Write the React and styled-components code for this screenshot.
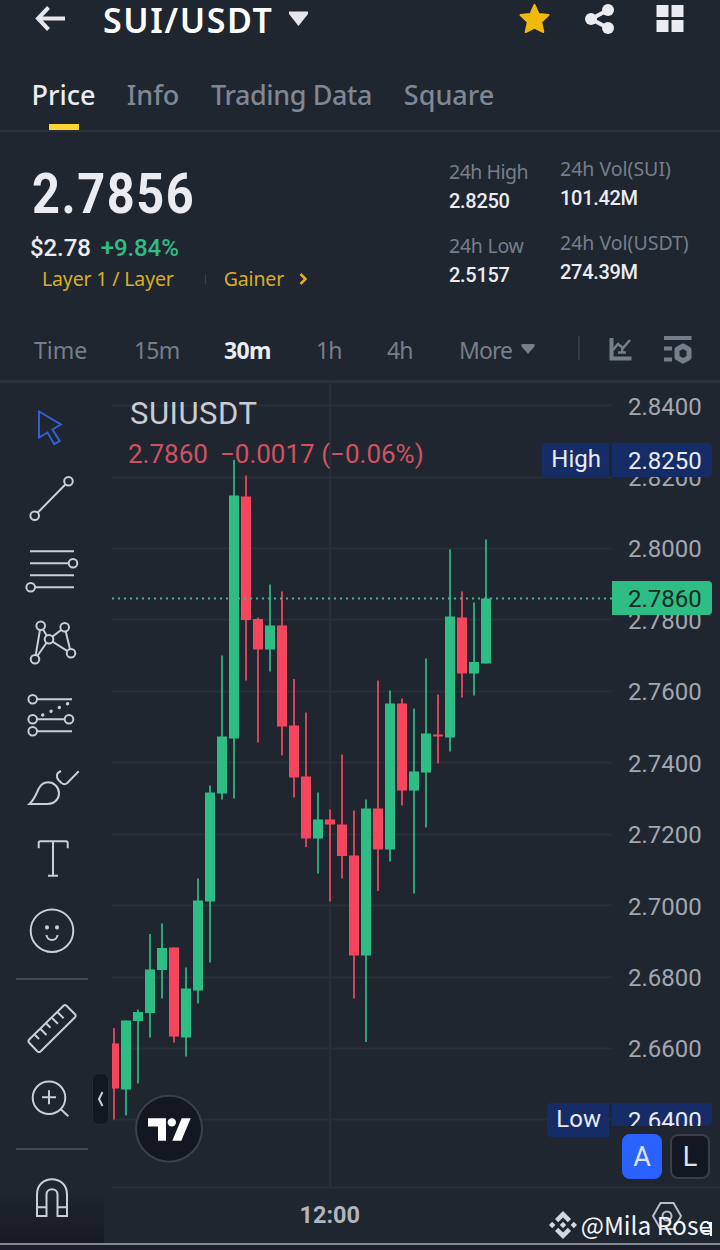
import React from "react";
import styled, { createGlobalStyle, ThemeProvider } from "styled-components";

const theme = {
   colors: {
      bg: "#1f262f",
      line: "#2a313b",
      text: "#eaecf2",
      muted: "#777e8b",
      yellow: "#f0b90b",
      green: "#2ebd85",
      red: "#f6465d",
      navy: "#152c66",
      icon: "#c9ced9"
   }
};

const GlobalStyle = createGlobalStyle`
   * {
      box-sizing: border-box;
   }

   body {
      margin: 0;
      background: #1f262f;
   }
`;

const Screen = styled.div`
   position: relative;
   display: flex;
   flex-direction: column;
   width: 720px;
   height: 1250px;
   overflow: hidden;
   background: ${({ theme }) => theme.colors.bg};
   color: ${({ theme }) => theme.colors.text};
   font-family: "Noto Sans", sans-serif;
   white-space: nowrap;
`;

const TopBar = styled.header`
   display: flex;
   align-items: center;
   height: 38px;
   padding: 0 34px 0 35px;

   svg {
      flex: none;
   }
`;

const Pair = styled.h1`
   width: 171px;
   margin: 1px 15px 0 38px;
   color: white;
   font-size: 34px;
   font-weight: 600;
   letter-spacing: 1.6px;
   line-height: 40px;
`;

const Actions = styled.div`
   display: flex;
   align-items: center;
   gap: 35px;
   margin-left: auto;
`;

const Tabs = styled.nav`
   display: flex;
   height: 94px;
   padding: 37px 31px 0 32px;
   border-bottom: 2px solid ${({ theme }) => theme.colors.line};
`;

const Tab = styled.div`
   display: flex;
   flex-direction: column;
   align-items: center;
   width: ${({ $width }) => $width}px;
   margin-right: 31px;
   color: ${({ theme, $active }) => ($active ? theme.colors.text : "#808794")};
   font-size: 27px;
   font-weight: 500;
   letter-spacing: ${({ $spacing }) => $spacing || 0}px;
   line-height: 40px;

   &::after {
      content: "";
      width: 30px;
      height: 6px;
      margin-top: 9px;
      background: ${({ $active }) => ($active ? "#fcd535" : "transparent")};
   }
`;

const Summary = styled.section`
   display: flex;
   height: 188px;
   padding-left: 32px;
`;

const PriceBlock = styled.div`
   width: 417px;
   padding-top: 30px;
   font-family: Roboto, sans-serif;
`;

const LastPrice = styled.div`
   font-size: 56px;
   font-weight: 700;
   letter-spacing: 1.8px;
   line-height: 64px;
   transform: scaleX(0.87);
   transform-origin: left;
`;

const Change = styled.div`
   display: flex;
   gap: 10px;
   margin: 9px 0 0 -2px;
   font-size: 24px;
   font-weight: 500;
   letter-spacing: -0.1px;
   line-height: 26px;

   span {
      color: ${({ theme }) => theme.colors.green};
   }
`;

const Tags = styled.div`
   display: flex;
   align-items: center;
   margin: 5px 0 0 10px;
   color: #d9ae27;
   font-family: "Noto Sans", sans-serif;
   font-size: 19.5px;
   letter-spacing: -0.15px;
   line-height: 26px;
`;

const TagRule = styled.i`
   width: 1px;
   height: 9px;
   margin: 0 18px 0 31px;
   background: #3a414c;
`;

const Stats = styled.div`
   width: ${({ $width }) => $width}px;
   padding-top: ${({ $top }) => $top}px;
`;

const Stat = styled.div`
   height: 74px;
   font-size: 19.5px;
   letter-spacing: ${({ $spacing }) => $spacing || 0}px;
   line-height: 28px;
   color: ${({ theme }) => theme.colors.muted};

   strong {
      display: block;
      margin-top: 1px;
      color: ${({ theme }) => theme.colors.text};
      font-family: Roboto, sans-serif;
      font-size: 20px;
      font-weight: 500;
      letter-spacing: -0.3px;
   }
`;

const Intervals = styled.nav`
   display: flex;
   align-items: center;
   height: 60px;
   padding-left: 34px;
   color: ${({ theme }) => theme.colors.muted};
   font-size: 23px;
`;

const Interval = styled.div`
   width: ${({ $width }) => $width}px;
   color: ${({ theme, $active }) => ($active ? theme.colors.text : "inherit")};
   font-weight: ${({ $active }) => ($active ? 700 : 400)};
   letter-spacing: ${({ $spacing }) => $spacing || 0}px;
   line-height: 30px;
`;

const ToolbarRule = styled.i`
   width: 2px;
   height: 24px;
   margin: 0 29px 4px 43px;
   background: #323944;
`;

const Workspace = styled.main`
   position: relative;
   display: grid;
   grid-template-columns: 104px 508px 108px;
   height: 863px;
   border-top: 3px solid ${({ theme }) => theme.colors.line};
   font-family: Roboto, sans-serif;
`;

const ToolRail = styled.aside`
   display: flex;
   flex-direction: column;
   padding-top: 8px;
   background: linear-gradient(transparent 805px, #171b26 855px);
`;

const ToolIcon = styled.svg`
   display: block;
   flex: none;
   width: 104px;
   height: 72px;
   fill: none;
   stroke: ${({ theme, $active }) => ($active ? "#3360d4" : theme.colors.icon)};
   stroke-width: 2;
`;

const RailRule = styled.hr`
   width: 72px;
   height: 2px;
   margin: 11px 16px;
   border: 0;
   background: #434853;

   & + svg {
      margin-top: ${({ $tight }) => ($tight ? 0 : 2)}px;
   }
`;

const Plot = styled.div`
   position: relative;
   padding-left: 8px;

   > svg {
      display: block;
      margin-right: -108px;
      overflow: visible;
   }
`;

const Legend = styled.div`
   position: absolute;
   top: 13px;
   left: 26px;
   color: #c9ccd6;
   font-size: 31px;
   letter-spacing: 0.5px;
   line-height: 36px;

   p {
      display: flex;
      gap: 12px;
      margin: 5px 0 0 -2px;
      color: #cf5264;
      font-size: 26px;
      letter-spacing: 0;
      line-height: 34px;
   }
`;

const EdgeTag = styled.div`
   position: absolute;
   top: ${({ $top }) => $top}px;
   right: 3px;
   height: 34px;
   padding: 0 8px 0 9px;
   border-radius: 4px 0 0 4px;
   background: ${({ theme }) => theme.colors.navy};
   color: #e8ebf3;
   font-size: 24px;
   line-height: 33px;
`;

const TimeLabel = styled.div`
   position: absolute;
   top: 818px;
   left: 195.5px;
   color: #b2b5be;
   font-size: 23.5px;
   font-weight: 700;
   line-height: 29px;
`;

const Collapse = styled.button`
   position: absolute;
   left: 92px;
   top: 690px;
   display: flex;
   align-items: center;
   justify-content: center;
   width: 17px;
   height: 52px;
   padding: 0;
   border: 1px solid #262b36;
   border-radius: 7px;
   background: #131722;
`;

const Axis = styled.div`
   position: relative;
   display: flex;
   flex-direction: column;
   gap: 47.45px;
   padding: 11.5px 0 0 16px;
   color: #a3a7b1;
   font-size: 24px;
   line-height: 24px;
`;

const AxisTag = styled.div`
   position: absolute;
   left: 0;
   top: ${({ $top }) => $top}px;
   width: 100px;
   height: ${({ $height }) => $height || 34}px;
   padding-left: 16px;
   overflow: hidden;
   border-radius: 0 4px 4px 0;
   background: ${({ theme, $color }) => theme.colors[$color]};
   color: ${({ $color }) => ($color === "green" ? "#0e2b24" : "#e8ebf3")};
   line-height: 36px;
`;

const ScaleModes = styled.div`
   position: absolute;
   top: 751px;
   left: 10px;
   display: flex;
   gap: 8px;
`;

const ScaleButton = styled.button`
   width: 40px;
   height: 45px;
   padding: 0;
   border: 2px solid ${({ $on }) => ($on ? "#2962ff" : "#3a3e49")};
   border-radius: 8px;
   background: ${({ $on }) => ($on ? "#2962ff" : "#131722")};
   color: #e0e3eb;
   font-family: Roboto, sans-serif;
   font-size: 27px;
`;

const AxisSettings = styled.svg`
   position: absolute;
   left: 39px;
   top: 817px;
`;

const BottomEdge = styled.footer`
   height: 7px;
   border-top: 2px solid #858a92;
   background: #1b1e2b;
`;

const Signature = styled.div`
   position: absolute;
   right: 8px;
   bottom: 9px;
   display: flex;
   align-items: center;
   gap: 4px;
   color: #f4f4f6;
   font-family: "Noto Sans CJK SC", sans-serif;
   font-size: 24.5px;
   line-height: 32px;
`;

const Corner = styled.svg`
   position: absolute;
   right: 0;
   bottom: 5px;
`;

const prices = [
   "2.8400",
   "2.8200",
   "2.8000",
   "2.7800",
   "2.7600",
   "2.7400",
   "2.7200",
   "2.7000",
   "2.6800",
   "2.6600"
];

// [high, body top, body bottom, low, rising]
const candles = [
   [1028, 1043.5, 1088.5, 1119.5, 0],
   [1020.5, 1020.5, 1089.5, 1115.5, 1],
   [1009.5, 1012, 1021, 1083.5, 1],
   [934, 969.5, 1013, 1037.5, 1],
   [923.5, 948, 970, 998.5, 1],
   [947.5, 947.5, 1036.5, 1042.5, 0],
   [967.5, 988.5, 1037.5, 1056.5, 1],
   [878.5, 900.5, 990.5, 1003.5, 1],
   [785.5, 792.5, 901.5, 962.5, 1],
   [655.5, 736.5, 793.5, 799.5, 1],
   [460, 495.5, 738.5, 798.5, 1],
   [475.5, 496.5, 620, 680.5, 0],
   [617.5, 619, 649.5, 742.5, 0],
   [584.5, 625.5, 649.5, 671.5, 1],
   [591.5, 625.5, 726.5, 755.5, 0],
   [679, 725.5, 777.5, 797.5, 0],
   [712.5, 776.5, 838.5, 847, 0],
   [792.5, 819.5, 838.5, 873.5, 1],
   [809.5, 819.5, 824.5, 901.5, 0],
   [754.5, 824.5, 856, 878.5, 0],
   [810.5, 855.5, 955.5, 998.5, 0],
   [799.5, 808.5, 955.5, 1042, 1],
   [680.5, 808.5, 849.5, 891, 0],
   [690.5, 703.5, 849.5, 861.5, 1],
   [698.5, 703.5, 790.5, 805.5, 0],
   [708.5, 771.5, 790.5, 893.5, 1],
   [658.5, 733.5, 772.5, 827.5, 1],
   [694.5, 734.5, 736.5, 763.5, 0],
   [549.5, 616.5, 737.5, 751.5, 1],
   [591.5, 617.5, 673.5, 697.5, 0],
   [602.5, 662, 673.5, 695.5, 1],
   [539.5, 598.5, 663.5, 663.5, 1]
];

const gridRows = [405.5, 477.5, 548.5, 619.5, 691.5, 762.5, 834.5, 905.5, 977.5, 1048.5, 1119.5];

const Chart = () => (
   <svg width="608" height="860" viewBox="112 383 608 860">
      <defs>
         <clipPath id="plot">
            <rect x="112" y="383" width="500" height="860" />
         </clipPath>
      </defs>
      <g stroke="#292f39" strokeWidth="2">
         {gridRows.map(y => (
            <path key={y} d={`M112 ${y}H612`} />
         ))}
         <path d="M330 383V1187M112 1187.5H720" />
      </g>
      <g clipPath="url(#plot)">
         {candles.map(([high, top, bottom, low, up], index) => {
            const x = 114 + index * 12;
            return (
               <g key={index} fill={up ? theme.colors.green : theme.colors.red}>
                  <rect x={x - 1} y={high} width="2" height={low - high} opacity="0.85" />
                  <rect x={x - 5} y={top} width="10" height={bottom - top} />
               </g>
            );
         })}
      </g>
      <path d="M112 598.5H612" stroke="#47b58b" strokeWidth="2" strokeDasharray="2 4" />
      <circle cx="169" cy="1128.7" r="33" fill="#131722" stroke="#3c404b" strokeWidth="2" />
      <g fill="white">
         <path d="M148 1118.3h18v22.4h-8v-14.2h-10zM181.7 1118.3h9l-9.4 22.4h-9z" />
         <circle cx="171.8" cy="1122.4" r="4.2" />
      </g>
   </svg>
);

const Nodes = ({ points }) =>
   points.map(([cx, cy]) => (
      <circle key={`${cx}-${cy}`} cx={cx} cy={cy} r="4.3" fill={theme.colors.bg} />
   ));

const Tools = () => (
   <ToolRail>
      <ToolIcon $active>
         <path d="M39 20.5L61 33.5L52.5 38.5L59.7 50L54.3 53.2L47.5 41.5L39 46.5Z" />
      </ToolIcon>
      <ToolIcon>
         <path d="M34.7 52.7L68.5 18.3" />
         <Nodes points={[[34.7, 52.7], [68.5, 18.3]]} />
      </ToolIcon>
      <ToolIcon>
         <path d="M30 16.3H74M30 28.3H74M30 40.3H74M30 52.3H74" />
         <Nodes points={[[73, 28.3], [30.7, 52.3]]} />
      </ToolIcon>
      <ToolIcon>
         <path d="M35 52.3L40.7 18.7L49 32.3L64.7 20.3L71 46.3L49 32.3Z" />
         <Nodes points={[[40.7, 18.7], [64.7, 20.3], [49, 32.3], [35, 52.3], [71, 46.3]]} />
      </ToolIcon>
      <ToolIcon>
         <path d="M33 20.3H72M33 40.3H69M33 52.3H72" />
         <path d="M42.7 36L67.8 24.6" strokeWidth="3.4" strokeLinecap="round" strokeDasharray="0.1 9" />
         <Nodes points={[[32.7, 20.3], [32.7, 40.3], [69, 40.3], [32.7, 52.3]]} />
      </ToolIcon>
      <ToolIcon>
         <path d="M29.5 53H47.5C54 53 59 48.5 59 42.3S54 31.3 48 31.3C43 31.3 40.5 34 38.5 38C36 43.5 34 49 29.5 53Z" />
         <path d="M61 20C56 22 56 26 58.5 29L61.5 32Q64.5 34.5 67.5 31.7L78.7 20.3" />
      </ToolIcon>
      <ToolIcon>
         <path d="M38.7 25.3V20Q38.7 18.3 40.4 18.3H66Q67.7 18.3 67.7 20V25.3M53 18.3V52.7M48 52.7H58" />
      </ToolIcon>
      <ToolIcon>
         <circle cx="52" cy="35.7" r="21.3" />
         <path d="M46.5 40C47 46.5 57 46.5 57.5 40" />
         <path d="M47 32.3v.1M57 32.3v.1" strokeWidth="4" strokeLinecap="round" />
      </ToolIcon>
      <RailRule />
      <ToolIcon>
         <path d="M29.2 46.5L63.5 12.7Q65 11.4 66.5 12.7L75 21.2Q76.3 22.7 75 24.2L40.5 58.4Q39 59.7 37.5 58.4L29.2 49.8Q27.8 48.2 29.2 46.5Z" />
         <path d="M34.5 41.5l4.5 4.5M40.3 35.8l6.2 6.2M46 30.2l4.5 4.5M51.7 24.6l6.2 6.2M57.4 19l6.2 6.2" />
      </ToolIcon>
      <ToolIcon>
         <circle cx="49" cy="32.7" r="16.3" />
         <path d="M42 32.3H56M49 25.3V39.3M60.8 44.2L68.3 51.3" />
      </ToolIcon>
      <RailRule $tight />
      <ToolIcon>
         <path d="M37 55V33.5C37 13 67 13 67 33.5V55H57.5V33.5C57.5 26.5 46.5 26.5 46.5 33.5V55ZM37 46.3H46.5M57.5 46.3H67" />
      </ToolIcon>
   </ToolRail>
);

const App = () => (
   <ThemeProvider theme={theme}>
      <GlobalStyle />
      <Screen>
         <TopBar>
            <svg width="30" height="26" viewBox="0 0 30 26" fill="none" stroke="#e4e6ec" strokeWidth="4">
               <path d="M13.5 1.5L3 12.5L13.5 23.5M3.5 12.5H30" />
            </svg>
            <Pair>SUI/USDT</Pair>
            <svg width="19" height="20" viewBox="0 0 19 20">
               <path d="M0 2.5H19V5L9.5 17L0 5Z" fill="#e4e6ec" />
            </svg>
            <Actions>
               <svg width="31" height="32" viewBox="0 0 31 32" fill="#f0b90b" stroke="#f0b90b">
                  <path d="M15.5 2L19.5 11L29.5 12L22.2 19L24.3 29L15.5 24.5L6.7 29L8.8 19L1.5 12L11.5 11Z" strokeLinejoin="round" strokeWidth="2" />
               </svg>
               <svg width="29" height="32" viewBox="0 0 29 32" fill="#eaecf2">
                  <path d="M23 7L6 16L23 25" fill="none" stroke="#eaecf2" strokeWidth="4" />
                  <circle cx="6" cy="16" r="6" />
                  <circle cx="23" cy="7" r="6" />
                  <circle cx="23" cy="25" r="6" />
               </svg>
               <svg width="37" height="30" viewBox="-1 0 37 30" fill="#eaecf2">
                  <path d="M6.5 1h12v12h-12zM21.5 1h12v12h-12zM6.5 16h12v12h-12zM21.5 16h12v12h-12z" />
               </svg>
            </Actions>
         </TopBar>
         <Tabs>
            <Tab $width={63} $active>Price</Tab>
            <Tab $width={54}>Info</Tab>
            <Tab $width={161} $spacing={-0.4}>Trading Data</Tab>
            <Tab $width={92}>Square</Tab>
         </Tabs>
         <Summary>
            <PriceBlock>
               <LastPrice>2.7856</LastPrice>
               <Change>
                  $2.78 <span>+9.84%</span>
               </Change>
               <Tags>
                  Layer 1 / Layer
                  <TagRule />
                  Gainer
                  <svg width="40" height="14" viewBox="0 0 40 14" fill="none" stroke="#e0b020" strokeWidth="2.5">
                     <path d="M16.5 2L21.5 7L16.5 12" />
                  </svg>
               </Tags>
            </PriceBlock>
            <Stats $width={111} $top={26}>
               <Stat $spacing={-0.5}>24h High<strong>2.8250</strong></Stat>
               <Stat $spacing={-0.25}>24h Low<strong>2.5157</strong></Stat>
            </Stats>
            <Stats $width={140} $top={23}>
               <Stat>24h Vol(SUI)<strong>101.42M</strong></Stat>
               <Stat>24h Vol(USDT)<strong>274.39M</strong></Stat>
            </Stats>
         </Summary>
         <Intervals>
            <Interval $width={100}>Time</Interval>
            <Interval $width={90} $spacing={-0.8}>15m</Interval>
            <Interval $width={92} $spacing={-0.6} $active>30m</Interval>
            <Interval $width={71} $spacing={-1}>1h</Interval>
            <Interval $width={72} $spacing={-1}>4h</Interval>
            <Interval $width={62} $spacing={-0.9}>More</Interval>
            <svg width="14" height="14" viewBox="0 0 14 14" fill="#777e8b">
               <path d="M0.5 1H13.5V3.5L7 11L0.5 3.5Z" />
            </svg>
            <ToolbarRule />
            <svg width="24" height="24" viewBox="0 0 24 24" fill="none" stroke="#777e8b" strokeWidth="3">
               <path d="M2.5 0V20.5H22.5" strokeWidth="4" />
               <path d="M4 12L9 6L14 10L21 2M9 14.5H17M13.2 10V15" strokeWidth="2.5" />
            </svg>
            <svg width="62" height="30" viewBox="0 0 62 30" fill="none" stroke="#777e8b">
               <path d="M31 3H58.5M31 13.5H39M31 24.5H39" strokeWidth="4" />
               <path d="M50 11L56 14.5V22.5L50 26L44 22.5V14.5Z" strokeWidth="5" strokeLinejoin="round" />
            </svg>
         </Intervals>
         <Workspace>
            <Tools />
            <Plot>
               <Chart />
               <Legend>
                  SUIUSDT
                  <p>
                     <span>2.7860</span>
                     <span>−0.0017 (−0.06%)</span>
                  </p>
               </Legend>
               <EdgeTag $top={60}>High</EdgeTag>
               <EdgeTag $top={720}>Low</EdgeTag>
               <TimeLabel>12:00</TimeLabel>
            </Plot>
            <Axis>
               {prices.map(price => (
                  <div key={price}>{price}</div>
               ))}
               <AxisTag $color="navy" $top={60}>2.8250</AxisTag>
               <AxisTag $color="green" $top={198}>2.7860</AxisTag>
               <AxisTag $color="navy" $top={720} $height={23}>2.6400</AxisTag>
               <ScaleModes>
                  <ScaleButton $on>A</ScaleButton>
                  <ScaleButton>L</ScaleButton>
               </ScaleModes>
               <AxisSettings width="32" height="32" viewBox="0 0 32 32" fill="none" stroke="#b9bdc8" strokeWidth="2">
                  <path d="M9.5 3H22.5L30 16L22.5 29H9.5L2 16Z" />
                  <circle cx="16" cy="16" r="4.5" />
               </AxisSettings>
            </Axis>
            <Collapse>
               <svg width="7" height="16" viewBox="0 0 7 16" fill="none" stroke="#c9ced9" strokeWidth="2">
                  <path d="M5.5 1L2 8L5.5 15" />
               </svg>
            </Collapse>
         </Workspace>
         <BottomEdge />
         <Signature>
            <svg width="28" height="28" viewBox="0 0 28 28" fill="#d5d7de">
               <path d="M14 0L22 8L18.8 11.2L14 6.4L9.2 11.2L6 8ZM14 28L22 20L18.8 16.8L14 21.6L9.2 16.8L6 20ZM3.2 10.8L6.4 14L3.2 17.2L0 14ZM24.8 10.8L28 14L24.8 17.2L21.6 14ZM14 10.8L17.2 14L14 17.2L10.8 14Z" />
            </svg>
            @Mila Rose
            <Corner width="12" height="14" viewBox="0 0 12 14" fill="none" stroke="#f4f4f6" strokeWidth="2">
               <path d="M7 1H11V14M1 9H11" />
            </Corner>
         </Signature>
      </Screen>
   </ThemeProvider>
);

export default App;
